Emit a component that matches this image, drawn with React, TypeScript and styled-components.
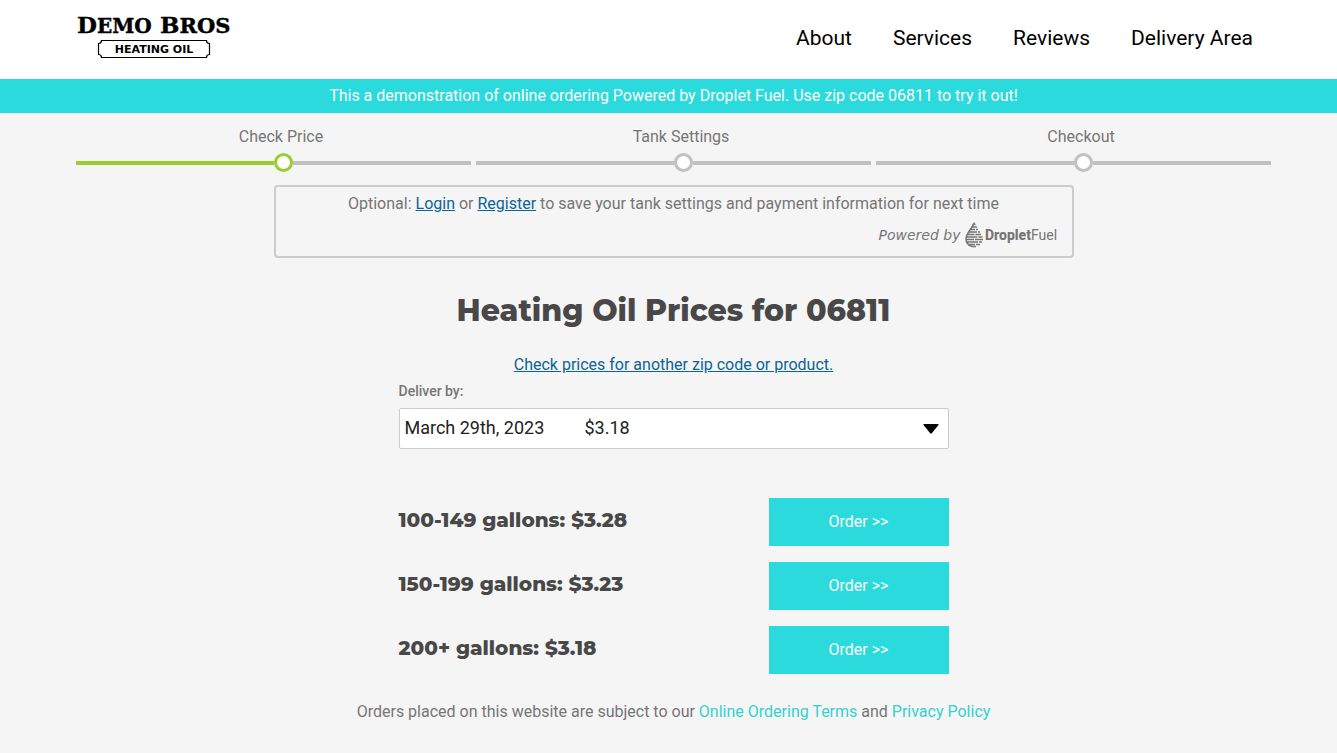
import React from 'react';
import styled, { createGlobalStyle } from 'styled-components';

const brand = '#2adadd';
const line = '#c0c0c0';
const active = '#9acd32';

const Global = createGlobalStyle`
  * { box-sizing: border-box; }
  body { margin: 0; background: #f5f5f5; color: #757575; font: 16px/24px Roboto, sans-serif; }
  h1, h2, p { margin: 0; }
`;

const Header = styled.header`
  background: #fff;
  padding: 8px 0 16px 10px;
`;

const Container = styled.div`
  max-width: 1195px;
  margin: 0 auto;
`;

const HeaderRow = styled(Container)`
  display: flex;
  justify-content: space-between;
  align-items: center;
`;

const Logo = styled.a`
  color: #000;
  svg { display: block; }
`;

const Nav = styled.nav`
  display: flex;
  flex-wrap: wrap;
  gap: 0 41px;
  padding: 5px 18px 0 0;
`;

const NavLink = styled.a`
  color: #000;
  font-size: 21px;
  text-decoration: none;
`;

const Banner = styled.p`
  background: ${brand};
  color: #fff;
  text-align: center;
  padding: 5px 0 5px 10px;
`;

const Content = styled.div`
  padding: 12px 0 28px 10px;
`;

const Steps = styled.ol`
  list-style: none;
  margin: 0;
  padding: 0;
  display: flex;
  gap: 5px;
`;

const Step = styled.li`
  flex: 1;
  text-align: center;
`;

const StepLabel = styled.div`
  padding-left: 15px;
`;

const Track = styled.div<{ $active?: boolean }>`
  display: flex;
  align-items: center;
  margin-top: 4px;

  &::before, &::after {
    content: '';
    height: 4px;
    background: ${line};
  }
  &::before {
    flex: 1 0 20px;
    background: ${p => (p.$active ? active : line)};
  }
  &::after { flex: 1 0 0; }
`;

const Dot = styled.span<{ $active?: boolean }>`
  width: 19px;
  height: 19px;
  border-radius: 50%;
  background: #fff;
  border: 3px solid ${p => (p.$active ? active : line)};
`;

const Notice = styled.section`
  max-width: 800px;
  margin: 13px auto 0;
  border: 2px solid #ccc;
  border-radius: 4px;
  padding: 5px 15px 7px;
  text-align: center;
`;

const BlueLink = styled.a`
  color: #0b6496;
`;

const Powered = styled.div`
  display: flex;
  justify-content: flex-end;
  align-items: center;
  gap: 4px;
  margin-top: 5px;
  font: italic 14px/24px "DejaVu Sans", sans-serif;
`;

const Main = styled.main`
  max-width: 550px;
  margin: 35px auto 0;
`;

const Title = styled.h1`
  font: 800 30px/36px Montserrat, sans-serif;
  color: #484848;
  text-align: center;
`;

const Change = styled.p`
  margin-top: 24px;
  text-align: center;
`;

const Label = styled.label`
  display: block;
  margin-top: 3px;
  font-size: 14px;
  line-height: 22px;
  font-weight: 500;
`;

const SelectBox = styled.div`
  position: relative;
  margin-top: 6px;

  svg {
    position: absolute;
    right: 10px;
    top: 16px;
    pointer-events: none;
  }
`;

const Select = styled.select`
  display: block;
  width: 100%;
  height: 41px;
  padding: 0 32px 2px 5px;
  appearance: none;
  border: 1px solid #ccc;
  border-radius: 2px;
  background: #fff;
  color: #222;
  font: 18px/24px Roboto, sans-serif;
`;

const Offers = styled.div`
  display: grid;
  gap: 16px;
  margin-top: 49px;
`;

const Offer = styled.div`
  display: flex;
  align-items: center;
  justify-content: space-between;
`;

const Price = styled.h2`
  font: 800 20px/24px Montserrat, sans-serif;
  color: #484848;
  padding-bottom: 4px;
`;

const OrderButton = styled.button`
  width: 180px;
  height: 48px;
  border: 0;
  background: ${brand};
  color: #fff;
  font: 16px/24px Roboto, sans-serif;
  cursor: pointer;
`;

const Terms = styled.p`
  margin-top: 26px;
  text-align: center;

  a { color: #35d0d3; text-decoration: none; }
`;

const DemoLogo = () => (
  <svg width="160" height="55" viewBox="0 0 160 55" role="img" aria-label="Demo Bros Heating Oil">
    <g fill="currentColor" stroke="currentColor" strokeWidth="0.4" fontFamily="'DejaVu Serif', serif" fontWeight="700" fontSize="20">
      <text x="1" y="25"><tspan fontSize="23">D</tspan>EMO</text>
      <text x="84" y="25"><tspan fontSize="23">B</tspan><tspan fontSize="21">ROS</tspan></text>
    </g>
    <path d="M25.500 32.500H130.500Q130.500 35.500 133.500 35.500V46.500Q130.500 46.500 130.500 49.500H25.500Q25.500 46.500 22.500 46.500V35.500Q25.500 35.500 25.500 32.500Z" fill="none" stroke="currentColor" strokeWidth="1.200" />
    <text x="78" y="45" textAnchor="middle" fill="currentColor" fontFamily="'DejaVu Sans', sans-serif" fontWeight="700" fontSize="11">HEATING OIL</text>
  </svg>
);

const DropletLogo = () => (
  <svg width="92" height="28" viewBox="0 0 92 28" role="img" aria-label="DropletFuel">
    <g stroke="#757575" strokeWidth="1.500" fill="none">
      <path d="M7.500 3.500H10.500M6.500 6H12M5 8.500H10M11 8.500H13M4 11H12M13 11H15M3 13.500H9.500M10.500 13.500H16M2 16H12.500M13.500 16H17.500M1 18.500H9M10 18.500H18M2 21H13M14 21H17M3 23.500H10M11 23.500H15" />
      <path d="M9.500 1.500C7 7.500 1 12.500 1 18Q1 23.500 7 25.500H11" />
    </g>
    <g fill="#757575" fontFamily="Roboto, sans-serif" fontSize="14" fontStyle="normal">
      <text x="20" y="19"><tspan fontWeight="800">Droplet</tspan><tspan fontWeight="400">Fuel</tspan></text>
    </g>
  </svg>
);

const steps = ['Check Price', 'Tank Settings', 'Checkout'];
const navItems = ['About', 'Services', 'Reviews', 'Delivery Area'];
const offers = ['100-149 gallons: $3.28', '150-199 gallons: $3.23', '200+ gallons: $3.18'];

export default function App() {
  return (
    <>
      <Global />
      <Header>
        <HeaderRow>
          <Logo href="#"><DemoLogo /></Logo>
          <Nav>{navItems.map(t => <NavLink key={t} href="#">{t}</NavLink>)}</Nav>
        </HeaderRow>
      </Header>
      <Banner>This a demonstration of online ordering Powered by Droplet Fuel. Use zip code 06811 to try it out!</Banner>
      <Content>
        <Container>
          <Steps>
            {steps.map((t, i) => (
              <Step key={t}>
                <StepLabel>{t}</StepLabel>
                <Track $active={i === 0}><Dot $active={i === 0} /></Track>
              </Step>
            ))}
          </Steps>
          <Notice>
            <p>Optional: <BlueLink href="#">Login</BlueLink> or <BlueLink href="#">Register</BlueLink> to save your tank settings and payment information for next time</p>
            <Powered>Powered by <DropletLogo /></Powered>
          </Notice>
          <Main>
            <Title>Heating Oil Prices for 06811</Title>
            <Change><BlueLink href="#">Check prices for another zip code or product.</BlueLink></Change>
            <Label htmlFor="deliver">Deliver by:</Label>
            <SelectBox>
              <Select id="deliver">
                <option>{'March 29th, 2023' + '\u00a0'.repeat(9) + '$3.18'}</option>
              </Select>
              <svg width="16" height="10" viewBox="0 0 16 10" aria-hidden="true">
                <path d="M1 0H15Q16 0 15.500 1L9 9Q8 10 7 9L.5 1Q0 0 1 0Z" fill="#000" />
              </svg>
            </SelectBox>
            <Offers>
              {offers.map(t => (
                <Offer key={t}>
                  <Price>{t}</Price>
                  <OrderButton type="button">Order &gt;&gt;</OrderButton>
                </Offer>
              ))}
            </Offers>
          </Main>
          <Terms>Orders placed on this website are subject to our <a href="#">Online Ordering Terms</a> and <a href="#">Privacy Policy</a></Terms>
        </Container>
      </Content>
    </>
  );
}
